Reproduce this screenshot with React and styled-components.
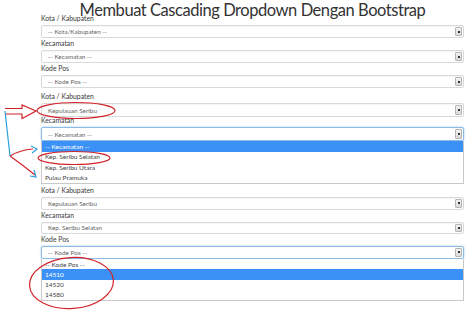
import React from 'react'
import styled, { createGlobalStyle } from 'styled-components'

const Global = createGlobalStyle`
    body {
        margin: 0;
        background: #fff;
        font-family: Lato, "Liberation Sans", sans-serif;
    }
`

const Page = styled.div`
    position: relative;
    width: 474px;
    height: 312px;
    overflow: hidden;
    background: #fff;
`

const Form = styled.div`
    margin-left: 41px;
    width: 423px;
    display: flex;
    flex-direction: column;
`

const Title = styled.h1`
    margin: 0;
    height: 13px;
    font-family: Lato, "Liberation Sans", sans-serif;
    font-weight: 400;
    font-size: 16.5px;
    letter-spacing: -0.45px;
    line-height: 20px;
    color: #333;
    text-align: center;
    white-space: nowrap;
`

const Label = styled.div`
    height: ${props => props.h}px;
    display: flex;
    align-items: flex-end;
    padding-bottom: 2px;
    box-sizing: border-box;
    font-size: 6.8px;
    line-height: 9px;
    color: #3a3a3a;
`

const Select = styled.div`
    height: ${props => props.h}px;
    box-sizing: border-box;
    display: flex;
    align-items: center;
    border: 1px solid ${props => (props.focus ? '#8cbbe6' : '#d9d9d9')};
    border-radius: 2px;
    background: #fff;
    box-shadow: ${props => (props.focus ? '0 0 2px rgba(102, 175, 233, 0.7)' : 'inset 0 1px 1px rgba(0, 0, 0, 0.04)')};
    padding-left: 6px;
    font-size: 6.4px;
    color: #666;
`

const SelectText = styled.span`
    flex: 1;
    white-space: nowrap;
`

const ArrowButton = styled.span`
    align-self: stretch;
    width: 5px;
    margin: 1px 1px 1px 0;
    border: 1px solid #b5b5b5;
    border-radius: 1px;
    background: linear-gradient(#f2f2f2, #d9d9d9);
    display: flex;
    align-items: center;
    justify-content: center;

    &::after {
        content: '';
        width: 2px;
        height: 2px;
        background: #333;
    }
`

const List = styled.div`
    height: ${props => props.h}px;
    box-sizing: border-box;
    border: 1px solid #c8c8c8;
    border-top: none;
    display: flex;
    flex-direction: column;
    background: #fff;
`

const Option = styled.div`
    flex: 1;
    display: flex;
    align-items: center;
    padding-left: 3px;
    font-size: 6.5px;
    color: ${props => (props.active ? '#fff' : '#444')};
    background: ${props => (props.active ? '#3b91f5' : 'transparent')};
`

const Marks = styled.svg`
    position: absolute;
    left: 0;
    top: 0;
    pointer-events: none;
`

const fields = [
    { label: 'Kota / Kabupaten', lh: 12, sh: 13, value: '-- Kota/Kabupaten --' },
    { label: 'Kecamatan', lh: 12, sh: 13, value: '-- Kecamatan --' },
    { label: 'Kode Pos', lh: 12, sh: 13, value: '-- Kode Pos --' },
    { label: 'Kota / Kabupaten', lh: 15, sh: 14, value: 'Kepulauan Seribu' },
    {
        label: 'Kecamatan', lh: 10, sh: 14, value: '-- Kecamatan --', focus: true,
        options: ['-- Kecamatan --', 'Kep. Seribu Selatan', 'Kep. Seribu Utara', 'Pulau Pramuka'],
        selected: 0, listH: 43,
    },
    { label: 'Kota / Kabupaten', lh: 13, sh: 12.5, value: 'Kepulauan Seribu' },
    { label: 'Kecamatan', lh: 12, sh: 12.5, value: 'Kep. Seribu Selatan' },
    {
        label: 'Kode Pos', lh: 11.5, sh: 13.5, value: '-- Kode Pos --', focus: true,
        options: ['-- Kode Pos --', '14510', '14520', '14580'],
        selected: 1, listH: 42,
    },
]

const Annotations = () => (
    <Marks width="474" height="312" viewBox="0 0 474 312">
        <g fill="none" stroke="#d2232a" strokeWidth="1.2">
            <ellipse cx="76" cy="110.5" rx="39" ry="8" />
            <ellipse cx="74" cy="158" rx="36" ry="6.5" />
            <ellipse cx="71.5" cy="283" rx="42" ry="25.5" transform="rotate(-4 71.5 283)" />
            <path d="M5 108.5 L22 108.5 L22 105 L36 111 L22 118.5 L22 114 L5 114" />
            <path d="M10 156 Q20 150 33 149" />
            <path d="M10 156 Q24 166 35 175" />
        </g>
        <g fill="none" stroke="#2b9fdc" strokeWidth="1.2">
            <path d="M5 111 L10 156" />
            <path d="M31 146 L37 149 L32 153" />
            <path d="M30 176 L36 177 L34 170" />
        </g>
    </Marks>
)

const App = () => (
    <Page>
        <Global />
        <Form>
            <Title>Membuat Cascading Dropdown Dengan Bootstrap</Title>
            {fields.map((f, i) => (
                <React.Fragment key={i}>
                    <Label h={f.lh}>{f.label}</Label>
                    <Select h={f.sh} focus={f.focus}>
                        <SelectText>{f.value}</SelectText>
                        <ArrowButton />
                    </Select>
                    {f.options && (
                        <List h={f.listH}>
                            {f.options.map((o, j) => (
                                <Option key={o} active={j === f.selected}>{o}</Option>
                            ))}
                        </List>
                    )}
                </React.Fragment>
            ))}
        </Form>
        <Annotations />
    </Page>
)

export default App
